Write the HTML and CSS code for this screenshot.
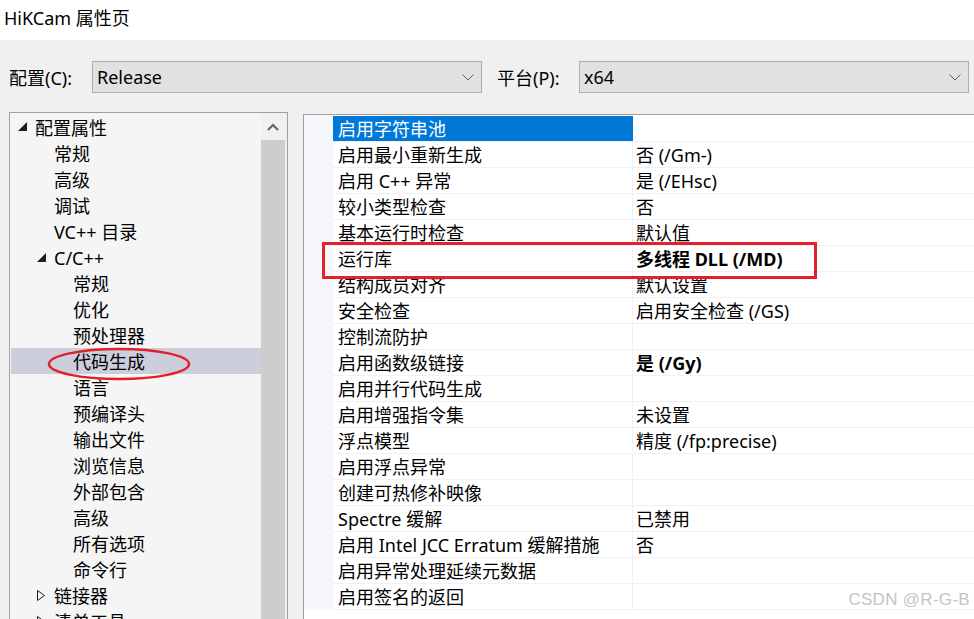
FILE: index.html
```html
<!DOCTYPE html>
<html lang="zh-CN">
<head>
<meta charset="utf-8">
<title>HiKCam 属性页</title>
<link rel="stylesheet" href="styles.css">
</head>
<body>
<div class="titlebar">HiKCam 属性页</div>

<div class="config">
  <span class="label">配置(C):</span>
  <div class="combo"><span>Release</span><svg class="chev" width="12" height="7" viewBox="0 0 12 7"><polyline points="0.5,0.5 6,6 11.5,0.5" fill="none" stroke="#606060" stroke-width="1"/></svg></div>
  <span class="label label2">平台(P):</span>
  <div class="combo"><span>x64</span><svg class="chev" width="12" height="7" viewBox="0 0 12 7"><polyline points="0.5,0.5 6,6 11.5,0.5" fill="none" stroke="#606060" stroke-width="1"/></svg></div>
</div>

<div class="main">
  <div class="tree">
    <div class="tree-list">
      <div class="trow l0"><span class="tog"><svg width="9" height="9" viewBox="0 0 9 9"><polygon points="0,9 9,9 9,0" fill="#1e1e1e"/></svg></span><span>配置属性</span></div>
      <div class="trow l1"><span class="tog"></span><span>常规</span></div>
      <div class="trow l1"><span class="tog"></span><span>高级</span></div>
      <div class="trow l1"><span class="tog"></span><span>调试</span></div>
      <div class="trow l1"><span class="tog"></span><span>VC++ 目录</span></div>
      <div class="trow l1"><span class="tog"><svg width="9" height="9" viewBox="0 0 9 9"><polygon points="0,9 9,9 9,0" fill="#1e1e1e"/></svg></span><span>C/C++</span></div>
      <div class="trow l2"><span class="tog"></span><span>常规</span></div>
      <div class="trow l2"><span class="tog"></span><span>优化</span></div>
      <div class="trow l2"><span class="tog"></span><span>预处理器</span></div>
      <div class="trow l2 selected"><span class="tog"></span><span>代码生成</span></div>
      <div class="trow l2"><span class="tog"></span><span>语言</span></div>
      <div class="trow l2"><span class="tog"></span><span>预编译头</span></div>
      <div class="trow l2"><span class="tog"></span><span>输出文件</span></div>
      <div class="trow l2"><span class="tog"></span><span>浏览信息</span></div>
      <div class="trow l2"><span class="tog"></span><span>外部包含</span></div>
      <div class="trow l2"><span class="tog"></span><span>高级</span></div>
      <div class="trow l2"><span class="tog"></span><span>所有选项</span></div>
      <div class="trow l2"><span class="tog"></span><span>命令行</span></div>
      <div class="trow l1"><span class="tog"><svg width="9" height="11" viewBox="0 0 9 11"><polygon points="0.5,0.5 7.5,5.5 0.5,10.5" fill="none" stroke="#1e1e1e" stroke-width="1"/></svg></span><span>链接器</span></div>
      <div class="trow l1"><span class="tog"><svg width="9" height="11" viewBox="0 0 9 11"><polygon points="0.5,0.5 7.5,5.5 0.5,10.5" fill="none" stroke="#1e1e1e" stroke-width="1"/></svg></span><span>清单工具</span></div>
    </div>
    <div class="vscroll">
      <div class="sbtn"><svg width="12" height="8" viewBox="0 0 12 8"><polyline points="1,7 6,2 11,7" fill="none" stroke="#606060" stroke-width="2"/></svg></div>
      <div class="thumb"></div>
    </div>
  </div>

  <div class="props">
    <div class="gutter"></div>
    <div class="grid">
      <div class="prow sel"><div class="pname">启用字符串池</div><div class="pval"></div></div>
      <div class="prow"><div class="pname">启用最小重新生成</div><div class="pval">否 (/Gm-)</div></div>
      <div class="prow"><div class="pname">启用 C++ 异常</div><div class="pval">是 (/EHsc)</div></div>
      <div class="prow"><div class="pname">较小类型检查</div><div class="pval">否</div></div>
      <div class="prow"><div class="pname">基本运行时检查</div><div class="pval">默认值</div></div>
      <div class="prow"><div class="pname">运行库</div><div class="pval bold">多线程 DLL (/MD)</div></div>
      <div class="prow"><div class="pname">结构成员对齐</div><div class="pval">默认设置</div></div>
      <div class="prow"><div class="pname">安全检查</div><div class="pval">启用安全检查 (/GS)</div></div>
      <div class="prow"><div class="pname">控制流防护</div><div class="pval"></div></div>
      <div class="prow"><div class="pname">启用函数级链接</div><div class="pval bold">是 (/Gy)</div></div>
      <div class="prow"><div class="pname">启用并行代码生成</div><div class="pval"></div></div>
      <div class="prow"><div class="pname">启用增强指令集</div><div class="pval">未设置</div></div>
      <div class="prow"><div class="pname">浮点模型</div><div class="pval">精度 (/fp:precise)</div></div>
      <div class="prow"><div class="pname">启用浮点异常</div><div class="pval"></div></div>
      <div class="prow"><div class="pname">创建可热修补映像</div><div class="pval"></div></div>
      <div class="prow"><div class="pname">Spectre 缓解</div><div class="pval">已禁用</div></div>
      <div class="prow"><div class="pname">启用 Intel JCC Erratum 缓解措施</div><div class="pval">否</div></div>
      <div class="prow"><div class="pname">启用异常处理延续元数据</div><div class="pval"></div></div>
      <div class="prow"><div class="pname">启用签名的返回</div><div class="pval"></div></div>
    </div>
  </div>
</div>

<div class="mark-rect"></div>
<svg class="mark-ellipse" width="146" height="36" viewBox="0 0 146 36"><ellipse cx="73" cy="18" rx="70" ry="15" fill="none" stroke="#e2202a" stroke-width="2.5"/></svg>
<div class="watermark">CSDN @R-G-B</div>
</body>
</html>
```

FILE: styles.css
```css
* { box-sizing: border-box; }
html, body { margin: 0; padding: 0; }
body {
  width: 974px;
  height: 619px;
  overflow: hidden;
  position: relative;
  background: #f0f0f0;
  color: #000;
  font-family: "Noto Sans", "Noto Sans CJK SC", sans-serif;
  font-size: 18px;
}

.titlebar {
  height: 40px;
  background: #fff;
  padding-left: 4px;
  line-height: 37px;
}

.config {
  display: flex;
  align-items: center;
  height: 32px;
  margin-top: 21px;
  padding-left: 9px;
}
.label { width: 83px; white-space: nowrap; flex: none; }
.label2 { margin-left: 15px; width: 82px; }
.combo {
  width: 390px;
  flex: none;
  height: 32px;
  background: #e1e1e1;
  border: 1px solid #adadad;
  display: flex;
  align-items: center;
  justify-content: space-between;
  padding: 0 7px 0 4px;
  line-height: 30px;
}
.chev { display: block; }

.main {
  display: flex;
  align-items: flex-start;
  margin-top: 19px;
}

.tree {
  flex: none;
  margin-left: 9px;
  width: 279px;
  height: 520px;
  border: 1px solid #a0a0a0;
  border-bottom: none;
  background: #f5f5f5;
  display: flex;
}
.tree-list {
  flex: 1;
  padding: 1px 0 0 1px;
  overflow: hidden;
}
.trow {
  height: 26px;
  line-height: 26px;
  padding-top: 1px;
  display: flex;
  align-items: center;
  white-space: nowrap;
}
.trow.selected { background: #cccedb; }
.tog {
  width: 17px;
  height: 25px;
  display: flex;
  align-items: center;
  flex: none;
}
.tog svg { display: block; }
.l0 .tog { margin-left: 7px; }
.l1 .tog { margin-left: 26px; }
.l2 .tog { margin-left: 45px; }
.l0 .tog svg { margin-top: -3px; }
.l1 .tog svg { margin-top: -1px; }

.vscroll {
  width: 26px;
  flex: none;
  background: #f0f0f0;
  display: flex;
  flex-direction: column;
}
.sbtn {
  height: 27px;
  display: flex;
  align-items: center;
  justify-content: center;
  padding-right: 2px;
}
.sbtn svg { display: block; }
.thumb {
  width: 24px;
  flex: 1;
  background: #cdcdcd;
}

.props {
  flex: none;
  margin-left: 15px;
  margin-top: 2px;
  width: 700px;
  height: 520px;
  border-top: 1px solid #a0a0a0;
  border-left: 1px solid #a0a0a0;
  background: #fff;
  display: flex;
  align-items: flex-start;
}
.gutter {
  width: 29px;
  height: 495px;
  background: #f5f7fb;
  flex: none;
}
.grid {
  flex: 1;
  padding-top: 1px;
}
.prow {
  display: flex;
  height: 26px;
  border-bottom: 1px solid #eef2f8;
  line-height: 25px;
  white-space: nowrap;
}
.pname {
  width: 300px;
  padding-left: 5px;
  padding-top: 1px;
  border-right: 1px solid #eef2f8;
  flex: none;
  overflow: hidden;
}
.prow.sel .pname {
  background: #0078d7;
  color: #fff;
  border-right-color: #0078d7;
}
.pval {
  flex: 1;
  padding-left: 3px;
  padding-top: 1px;
  overflow: hidden;
}
.bold { font-weight: bold; }

.mark-rect {
  position: absolute;
  left: 322px;
  top: 242px;
  width: 495px;
  height: 37px;
  border: 3px solid #e5202b;
}
.mark-ellipse {
  position: absolute;
  left: 46px;
  top: 346px;
}
.watermark {
  position: absolute;
  right: 4px;
  top: 590px;
  font-family: "Liberation Sans", Arial, sans-serif;
  font-size: 17px;
  color: #c4c4c4;
  letter-spacing: 0.3px;
}
```
